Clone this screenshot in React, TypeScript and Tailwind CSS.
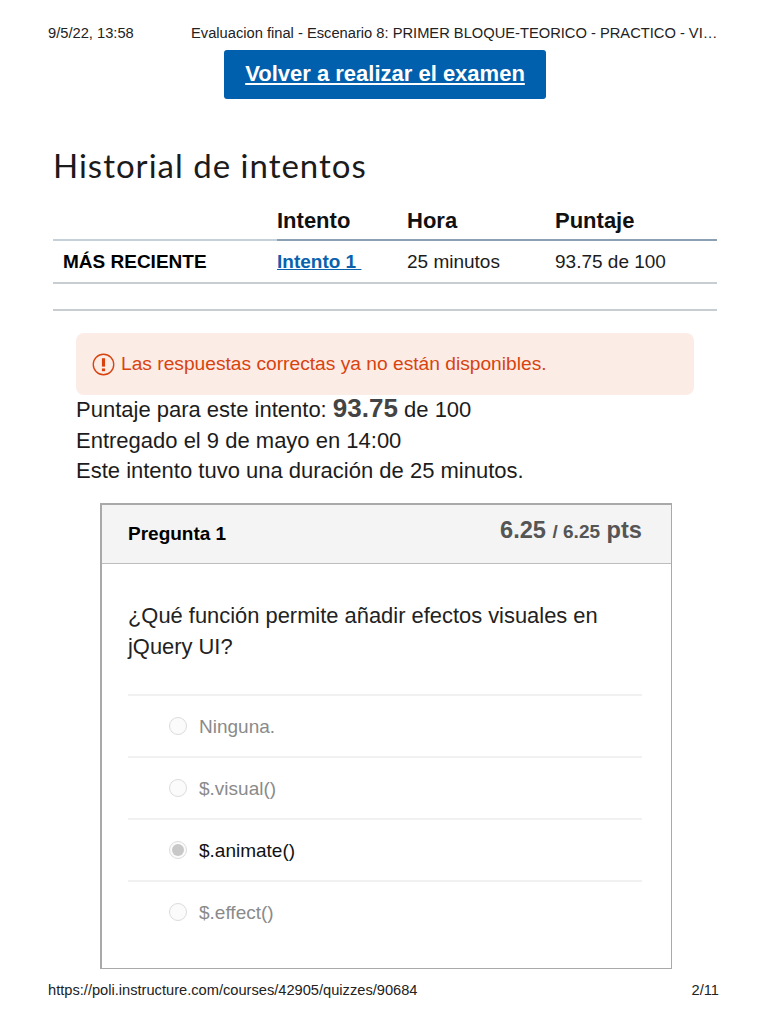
import React from 'react';

const options = [
  { label: 'Ninguna.', selected: false },
  { label: '$.visual()', selected: false },
  { label: '$.animate()', selected: true },
  { label: '$.effect()', selected: false },
];

const Radio = ({ selected }: { selected: boolean }) => (
  <span className="flex h-[18px] w-[18px] shrink-0 items-center justify-center rounded-full border border-[#dcdcdc] bg-[#fbfbfb]">
    {selected && <span className="h-[12px] w-[12px] rounded-full bg-[#c8c8c8]" />}
  </span>
);

export default function App() {
  return (
    <div className="flex h-[1024px] w-[768px] flex-col overflow-hidden bg-white font-['Liberation_Sans',sans-serif] text-black">
      <header className="flex h-[50px] shrink-0 items-start pl-[48px] pr-[49px] pt-[25px] text-[14.7px] leading-[16px] text-[#222]">
        <span className="w-[143px]">9/5/22, 13:58</span>
        <span className="whitespace-nowrap">Evaluacion final - Escenario 8: PRIMER BLOQUE-TEORICO - PRACTICO - VI…</span>
      </header>

      <div className="flex shrink-0 justify-center pl-[2px]">
        <a className="flex h-[49px] w-[322px] items-center justify-center rounded-[3px] bg-[#0160ad] pb-[3px] text-[22px] font-bold text-white underline">
          Volver a realizar el examen
        </a>
      </div>

      <main className="shrink-0 px-[53px]">
        <h1 className="mt-[46px] font-['Lato',sans-serif] text-[33px] leading-[40px] tracking-[1px] text-[#1b1b1b]">
          Historial de intentos
        </h1>

        <div className="mt-[17px] grid w-[664px] grid-cols-[224px_130px_148px_1fr] text-[22px] font-bold leading-[26px] text-[#111]">
          <div className="h-[39px] border-b-2 border-[#c5d0d8]" />
          <div className="h-[39px] border-b-2 border-[#8ba0b2] pt-[6px]">Intento</div>
          <div className="h-[39px] border-b-2 border-[#8ba0b2] pt-[6px]">Hora</div>
          <div className="h-[39px] whitespace-nowrap border-b-2 border-[#8ba0b2] pt-[6px]">Puntaje</div>
        </div>
        <div className="grid h-[43px] w-[664px] grid-cols-[224px_130px_148px_1fr] items-center border-b-2 border-[#c7cdd1] pt-[2px] text-[19px] text-[#1c1c1c]">
          <span className="pl-[10px] font-bold text-black">MÁS RECIENTE</span>
          <a className="whitespace-pre font-bold text-[#0a62ad] underline">Intento 1 </a>
          <span>25 minutos</span>
          <span className="whitespace-nowrap">93.75 de 100</span>
        </div>
        <div className="mt-[25px] w-[664px] border-b-2 border-[#c7cdd1]" />

        <div className="mx-[23px] mt-[22px] flex h-[62px] w-[618px] items-center gap-[6px] rounded-[8px] bg-[#fbece6] px-[16px] text-[19.2px] text-[#d8430f]">
          <svg width="23" height="23" viewBox="0 0 22 22" fill="none" stroke="currentColor" className="shrink-0">
            <circle cx="11" cy="11" r="9.8" strokeWidth="1.3" />
            <path d="M11 5v8" strokeWidth="3" />
            <path d="M11 14.8v2.6" strokeWidth="3" />
          </svg>
          <span>Las respuestas correctas ya no están disponibles.</span>
        </div>

        <div className="ml-[23px] text-[22px] leading-[30px] text-[#1c1c1c]">
          <p className="-mt-[2px] h-[33px]">
            Puntaje para este intento: <span className="text-[26px] font-bold text-[#444]">93.75</span> de 100
          </p>
          <p>Entregado el 9 de mayo en 14:00</p>
          <p>Este intento tuvo una duración de 25 minutos.</p>
        </div>

        <section className="ml-[47px] mt-[17px] w-[572px] border-2 border-b-[1px] border-r-[1px] border-[#a9a9a9]">
          <div className="flex h-[59px] items-start justify-between border-b border-[#bdbdbd] bg-[#f4f4f4] pl-[26px] pr-[29px]">
            <span className="pt-[17px] text-[19px] font-bold leading-[24px] text-black">Pregunta 1</span>
            <span className="pt-[11px] text-[23.6px] font-bold leading-[28px] text-[#555]">
              6.25 <span className="text-[19px]">/ 6.25</span> pts
            </span>
          </div>
          <div className="h-[404px] px-[26px]">
            <p className="w-[514px] pt-[36px] text-[21.9px] leading-[31px] text-[#222]">
              ¿Qué función permite añadir efectos visuales en jQuery UI?
            </p>
            <ul className="mt-[32px] w-[514px]">
              {options.map((o) => (
                <li key={o.label} className="flex h-[62px] items-center gap-[12px] border-t-2 border-[#f1f1f1] pl-[41px]">
                  <Radio selected={o.selected} />
                  <span className={o.selected ? 'pt-[3px] text-[19px] text-[#111]' : 'pt-[3px] text-[19px] text-[#8a8a8a]'}>{o.label}</span>
                </li>
              ))}
            </ul>
          </div>
        </section>
      </main>

      <footer className="mt-[13px] flex shrink-0 justify-between pl-[48px] pr-[49px] text-[14.65px] leading-[16px] text-[#222]">
        <span>https://poli.instructure.com/courses/42905/quizzes/90684</span>
        <span>2/11</span>
      </footer>
    </div>
  );
}
